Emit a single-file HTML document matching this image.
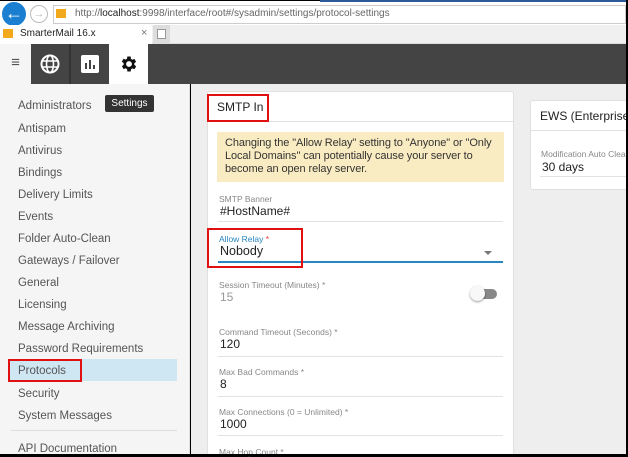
<!DOCTYPE html>
<html><head><style>
*{margin:0;padding:0;box-sizing:border-box}
body{width:628px;height:456px;overflow:hidden;font-family:"Liberation Sans",sans-serif;background:#000;position:relative}
.a{position:absolute}
.side div{position:absolute;left:18px;font-size:11.5px;color:#555}
.lbl{position:absolute;font-size:8.5px;color:#888}
.val{position:absolute;font-size:12px;color:#222}
.ul{position:absolute;height:1px;background:#e2e2e2}
</style></head><body>
<div class="a" style="left:0;top:1px;width:626px;height:24px;background:#fff"></div>
<div class="a" style="left:320px;top:0;width:306px;height:2px;background:#2a5a9a"></div>
<div class="a" style="left:2px;top:2px;width:24px;height:24px;border-radius:50%;background:#1a7fd0;color:#fff;font-size:18px;line-height:22px;text-align:center;font-weight:bold">&#8592;</div>
<div class="a" style="left:30px;top:5px;width:18px;height:18px;border-radius:50%;border:1px solid #bbb;color:#bbb;font-size:11px;line-height:16px;text-align:center">&#8594;</div>
<div class="a" style="left:53px;top:5px;width:573px;height:19px;border:1px solid #ccc;background:#fff"></div>
<div class="a" style="left:56px;top:9px;width:10px;height:9px;background:#f3a91c"></div>
<div class="a" style="left:75px;top:8px;font-size:10px;color:#666">http://<b style="color:#222;font-weight:normal">localhost</b>:9998/interface/root#/sysadmin/settings/protocol-settings</div>
<div class="a" style="left:0;top:25px;width:626px;height:19px;background:#f0f0f0;border-bottom:1px solid #ddd"></div>
<div class="a" style="left:0;top:25px;width:152px;height:19px;background:#fff"></div>
<div class="a" style="left:3px;top:29px;width:10px;height:9px;background:#f3a91c"></div>
<div class="a" style="left:20px;top:28px;font-size:10px;color:#222">SmarterMail 16.x</div>
<div class="a" style="left:141px;top:27px;font-size:11px;color:#777">×</div>
<div class="a" style="left:153px;top:25px;width:17px;height:19px;background:#ddd"></div>
<div class="a" style="left:157px;top:29px;width:9px;height:10px;border:1px solid #999;background:#fff"></div>
<div class="a" style="left:0;top:44px;width:626px;height:40px;background:#444"></div>
<div class="a" style="left:0;top:44px;width:31px;height:40px;background:#f5f5f5;color:#555;font-size:15px;line-height:38px;text-align:center">&#8801;</div>
<div class="a" style="left:69px;top:44px;width:2px;height:40px;background:#333"></div>
<div class="a" style="left:109px;top:44px;width:39px;height:40px;background:#fff"></div>
<svg class="a" style="left:40px;top:54px" width="20" height="20" viewBox="0 0 20 20"><circle cx="10" cy="10" r="8.5" fill="none" stroke="#fff" stroke-width="2"/><ellipse cx="10" cy="10" rx="3.5" ry="8.5" fill="none" stroke="#fff" stroke-width="1.6"/><path d="M2 7h16M2 13h16" stroke="#fff" stroke-width="1.6"/></svg>
<svg class="a" style="left:81px;top:55px" width="18" height="18"><rect width="18" height="18" rx="2" fill="#fff"/><path d="M5 14V8M9 14V5M13 14v-4" stroke="#444" stroke-width="2"/></svg>
<svg class="a" style="left:119px;top:54px" width="20" height="20" viewBox="0 0 24 24"><path fill="#111" d="M19.4 13a7.5 7.5 0 000-2l2.1-1.6-2-3.5-2.5 1a7.6 7.6 0 00-1.7-1L15 3h-4l-.4 2.7a7.6 7.6 0 00-1.7 1l-2.5-1-2 3.5L6.6 11a7.5 7.5 0 000 2l-2.1 1.6 2 3.5 2.5-1a7.6 7.6 0 001.7 1L11 21h4l.4-2.7a7.6 7.6 0 001.7-1l2.5 1 2-3.5zM13 15.5a3.5 3.5 0 110-7 3.5 3.5 0 010 7z" transform="translate(-1 0)"/></svg>
<div class="a" style="left:0;top:84px;width:190px;height:370px;background:#f5f5f5;border-right:1px solid #e0e0e0"></div>
<div class="a" style="left:8px;top:359px;width:169px;height:22px;background:#cfe6f3"></div>
<div class="a" style="left:8px;top:359px;width:74px;height:23px;border:2px solid #e01010"></div>
<div class="a" style="left:11px;top:430px;width:166px;height:1px;background:#ddd"></div>
<div class="side">
<div style="top:100px">Administrators</div><div style="top:123px">Antispam</div><div style="top:145px">Antivirus</div><div style="top:167px">Bindings</div><div style="top:189px">Delivery Limits</div><div style="top:211px">Events</div><div style="top:233px">Folder Auto-Clean</div><div style="top:255px">Gateways / Failover</div><div style="top:277px">General</div><div style="top:299px">Licensing</div><div style="top:321px">Message Archiving</div><div style="top:343px">Password Requirements</div><div style="top:365px">Protocols</div><div style="top:388px">Security</div><div style="top:410px">System Messages</div><div style="top:443px">API Documentation</div>
</div>
<div class="a" style="left:105px;top:95px;width:49px;height:17px;background:#333;border-radius:2px;color:#fff;font-size:10px;line-height:17px;text-align:center">Settings</div>
<div class="a" style="left:191px;top:84px;width:435px;height:370px;background:#eeeeee"></div>
<div class="a" style="left:207px;top:91px;width:307px;height:363px;background:#fff;border:1px solid #e0e0e0;border-bottom:none;border-radius:3px 3px 0 0"></div>
<div class="a" style="left:208px;top:121px;width:305px;height:1px;background:#e0e0e0"></div>
<div class="a" style="left:207px;top:94px;width:62px;height:28px;border:2px solid #e01010"></div>
<div class="a" style="left:217px;top:100px;font-size:12px;color:#222">SMTP In</div>
<div class="a" style="left:217px;top:132px;width:287px;height:50px;background:#faecc2"></div>
<div class="a" style="left:225px;top:137px;width:275px;font-size:11px;line-height:13px;color:#333;letter-spacing:-0.1px">Changing the "Allow Relay" setting to "Anyone" or "Only Local Domains" can potentially cause your server to become an open relay server.</div>
<div class="lbl" style="left:219px;top:194px">SMTP Banner</div>
<div class="val" style="left:220px;top:204px">#HostName#</div>
<div class="ul" style="left:218px;top:221px;width:285px"></div>
<div class="lbl" style="left:219px;top:234px;color:#2a86c0">Allow Relay <span style="color:#e33">*</span></div>
<div class="val" style="left:220px;top:244px;font-size:12.5px">Nobody</div>
<div class="a" style="left:484px;top:251px;border:4px solid transparent;border-top:4px solid #777"></div>
<div class="ul" style="left:218px;top:261px;width:285px;height:2px;background:#2a86c0"></div>
<div class="a" style="left:207px;top:228px;width:96px;height:40px;border:2px solid #e01010"></div>
<div class="lbl" style="left:219px;top:280px">Session Timeout (Minutes) *</div>
<div class="val" style="left:220px;top:290px;color:#999">15</div>
<div class="a" style="left:478px;top:289px;width:19px;height:10px;border-radius:5px;background:#888"></div>
<div class="a" style="left:470px;top:286px;width:15px;height:15px;border-radius:50%;background:#f8f8f8;box-shadow:0 1px 2px rgba(0,0,0,.4)"></div>
<div class="lbl" style="left:219px;top:327px">Command Timeout (Seconds) *</div>
<div class="val" style="left:220px;top:337px">120</div>
<div class="ul" style="left:218px;top:356px;width:285px"></div>
<div class="lbl" style="left:219px;top:367px">Max Bad Commands *</div>
<div class="val" style="left:220px;top:377px">8</div>
<div class="ul" style="left:218px;top:396px;width:285px"></div>
<div class="lbl" style="left:219px;top:407px">Max Connections (0 = Unlimited) *</div>
<div class="val" style="left:220px;top:417px">1000</div>
<div class="ul" style="left:218px;top:435px;width:285px"></div>
<div class="lbl" style="left:219px;top:447px">Max Hop Count *</div>
<div class="a" style="left:530px;top:100px;width:100px;height:90px;background:#fff;border:1px solid #e0e0e0;border-radius:3px"></div>
<div class="a" style="left:531px;top:130px;width:96px;height:1px;background:#e0e0e0"></div>
<div class="a" style="left:540px;top:109px;font-size:12px;color:#222;white-space:nowrap">EWS (Enterprise O</div>
<div class="lbl" style="left:541px;top:149px;white-space:nowrap">Modification Auto Clean</div>
<div class="val" style="left:542px;top:160px">30 days</div>
<div class="ul" style="left:540px;top:176px;width:86px"></div>
<div class="a" style="left:626px;top:0;width:2px;height:456px;background:#000"></div>
<div class="a" style="left:0;top:454px;width:628px;height:2px;background:#000"></div>
</body></html>
